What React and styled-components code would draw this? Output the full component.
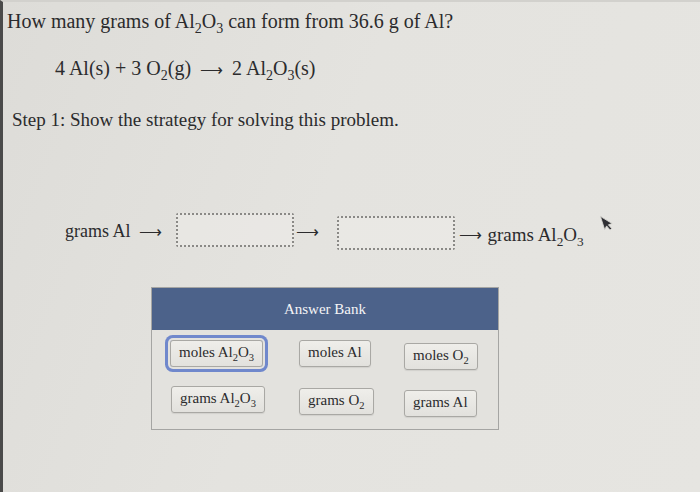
import React from "react";
import styled, { createGlobalStyle } from "styled-components";

const GlobalStyle = createGlobalStyle`
  html, body {
    margin: 0;
    padding: 0;
    background: #e1e0dc;
  }
  body {
    font-family: "Liberation Serif", "Times New Roman", serif;
    color: #2b2b2d;
  }
`;

const Page = styled.div`
  width: 700px;
  height: 492px;
  box-sizing: border-box;
  border-left: 3px solid #4a4a4a;
  border-top: 2px solid #d2d1cd;
  background: linear-gradient(110deg, #dddcd8 0%, #e4e3df 45%, #e6e5e1 100%);
  overflow: hidden;
  position: relative;
`;

const Question = styled.p`
  margin: 0;
  padding: 4px 0 0 4px;
  font-size: 20px;
  line-height: 30px;
`;

const Equation = styled.p`
  margin: 0;
  padding: 18px 0 0 52px;
  font-size: 20px;
  line-height: 28px;
`;

const StepTitle = styled.p`
  margin: 0;
  padding: 22px 0 0 9px;
  font-size: 19px;
  line-height: 28px;
`;

const Sub = styled.sub`
  font-size: 0.7em;
  vertical-align: -0.35em;
  line-height: 0;
`;

const Flow = styled.div`
  display: flex;
  align-items: center;
  margin: 78px 0 0 62px;
  font-size: 18px;
`;

const Arrow = styled.span`
  display: inline-block;
  margin: ${(p) => p.$margin || "0 10px"};
  font-size: 16px;
`;

const Target = styled.span`
  margin-top: 8px;
  font-size: 19px;
`;

const DropBox = styled.div`
  width: 114px;
  height: 30px;
  border: 2px dotted #8a8986;
  border-radius: 2px;
  margin-top: ${(p) => p.$shift || 0}px;
  background: rgba(236, 235, 231, 0.6);
`;

const Bank = styled.div`
  width: 346px;
  margin: 37px 0 0 148px;
  border: 1px solid #a5a5a3;
  background: #e3e2de;
`;

const BankHeader = styled.div`
  height: 42px;
  background: #4c628a;
  color: #f4f4f6;
  font-size: 15px;
  display: flex;
  align-items: center;
  justify-content: center;
`;

const Choices = styled.div`
  display: grid;
  grid-template-columns: 128px 107px 1fr;
  grid-auto-rows: 27px;
  row-gap: 19px;
  padding: 10px 8px 16px 16px;
  align-items: center;
`;

const Chip = styled.div`
  justify-self: start;
  display: flex;
  align-items: center;
  height: 27px;
  box-sizing: border-box;
  padding: 0 8px 2px;
  font-size: 15px;
  border: 1px solid #a9a8a4;
  border-radius: 3px;
  background: linear-gradient(#efeeea, #e2e1dd);
  box-shadow: ${(p) =>
    p.$focused
      ? "0 0 0 2px #e3e2de, 0 0 0 5px #7088cc"
      : "0 1px 1px rgba(0,0,0,0.08)"};
  white-space: nowrap;
  margin-left: ${(p) => p.$dx || 0}px;
  transform: translateY(${(p) => p.$dy || 0}px);
`;

const Cursor = styled.svg`
  position: absolute;
  left: 596px;
  top: 212px;
`;

const chips = [
  { label: ["moles Al", "2", "O", "3"], focused: true, dx: 2 },
  { label: ["moles Al"], dx: 3 },
  { label: ["moles O", "2"], dx: 1, dy: 3 },
  { label: ["grams Al", "2", "O", "3"], dx: 3 },
  { label: ["grams O", "2"], dx: 3, dy: 2 },
  { label: ["grams Al"], dx: 1, dy: 4 },
];

const Label = ({ parts }) => (
  <span>
    {parts.map((part, i) =>
      i % 2 === 0 ? <span key={i}>{part}</span> : <Sub key={i}>{part}</Sub>
    )}
  </span>
);

export default function App() {
  return (
    <Page>
      <GlobalStyle />
      <Question>
        How many grams of Al<Sub>2</Sub>O<Sub>3</Sub> can form from 36.6 g of
        Al?
      </Question>
      <Equation>
        4 Al(s) + 3 O<Sub>2</Sub>(g) <Arrow $margin="0 4px">⟶</Arrow> 2 Al
        <Sub>2</Sub>O<Sub>3</Sub>(s)
      </Equation>
      <StepTitle>Step 1: Show the strategy for solving this problem.</StepTitle>

      <Flow>
        <span>grams Al</span>
        <Arrow $margin="0 14px 0 8px">⟶</Arrow>
        <DropBox $shift={-2} />
        <Arrow $margin="0 18px 0 2px">⟶</Arrow>
        <DropBox $shift={4} />
        <Arrow $margin="6px 6px 0 4px">⟶</Arrow>
        <Target>
          grams Al<Sub>2</Sub>O<Sub>3</Sub>
        </Target>
      </Flow>

      <Bank>
        <BankHeader>Answer Bank</BankHeader>
        <Choices>
          {chips.map((c, i) => (
            <Chip key={i} $focused={c.focused} $dx={c.dx} $dy={c.dy}>
              <Label parts={c.label} />
            </Chip>
          ))}
        </Choices>
      </Bank>

      {/* mouse pointer, tilted a little */}
      <Cursor width="14" height="20" viewBox="0 0 14 20">
        <g transform="rotate(-18 7 10)">
          <path
            d="M4 1 L4 15 L7 12 L9 17 L11 16 L9 11.5 L13 11.5 Z"
            fill="#2f2f33"
            stroke="#d8d7d3"
            strokeWidth="0.8"
          />
        </g>
      </Cursor>
    </Page>
  );
}
